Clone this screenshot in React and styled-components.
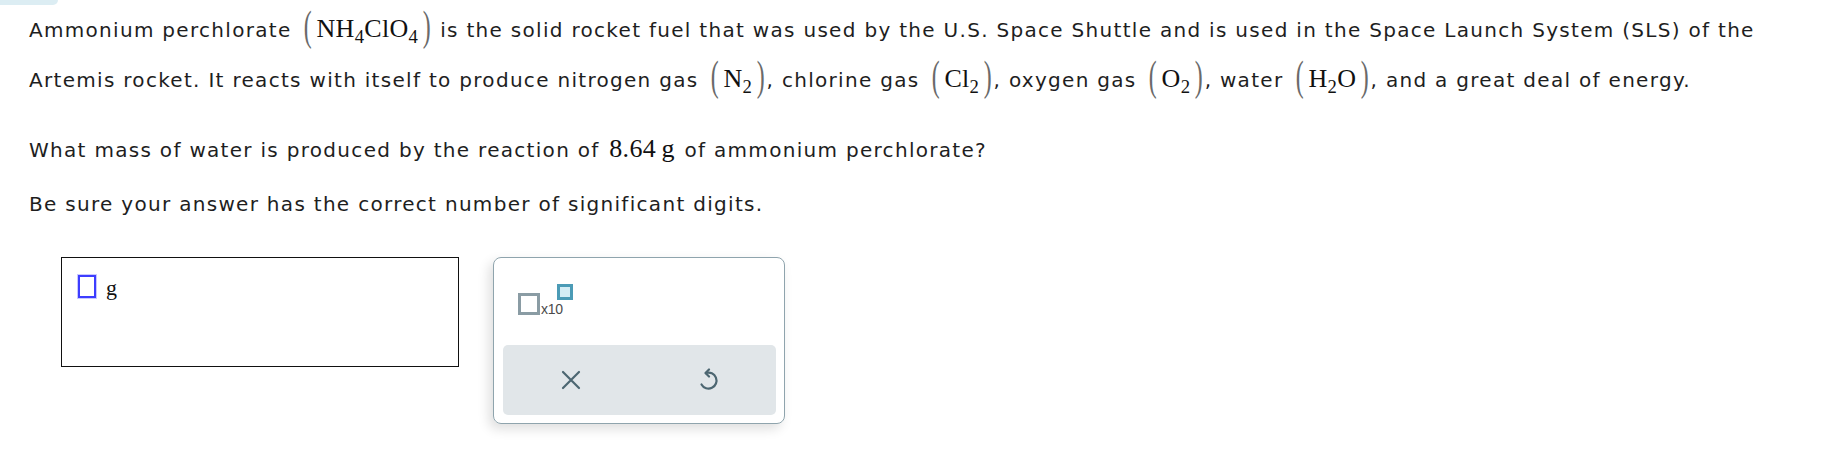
import React from 'react'
import styled, { createGlobalStyle } from 'styled-components'

const GlobalStyle = createGlobalStyle`
  body {
    margin: 0;
    background: #fff;
  }
`

const Page = styled.div`
  width: 1842px;
  height: 460px;
  overflow: hidden;
  font-family: "DejaVu Sans", Verdana, sans-serif;
  color: #1e1e1e;
`

const Tab = styled.div`
  width: 58px;
  height: 5px;
  background: #dcedf3;
  border-bottom-right-radius: 10px;
`

const Question = styled.div`
  padding: 0 40px 0 29px;
`

const Para = styled.p`
  margin: ${p => p.$top || 0}px 0 0;
  font-size: 20px;
  letter-spacing: 1.3px;
  line-height: ${p => p.$lh || 30}px;
`

const Math = styled.span`
  font-family: "Liberation Serif", "Times New Roman", serif;
  font-size: 26px;
  line-height: 1;
  letter-spacing: 0.3px;
  color: #111;
  margin: 0 ${p => p.$pad || 0}px;
`

const Sub = styled.span`
  font-size: 72%;
  line-height: 0;
  vertical-align: -0.3em;
`

const Paren = styled.span`
  display: inline-block;
  font-family: "Liberation Serif", "Times New Roman", serif;
  font-size: 28px;
  line-height: 1;
  letter-spacing: 0;
  color: #6a6a6a;
  transform: scale(0.85, 1.5);
  transform-origin: 50% 60%;
  margin: ${p => (p.$right ? '0 1px 0 4px' : '0 4px 0 4px')};
`

const Chem = ({ children }) => (
  <>
    <Paren>(</Paren>
    <Math>{children}</Math>
    <Paren $right>)</Paren>
  </>
)

const AnswerRow = styled.div`
  display: flex;
  align-items: flex-start;
  gap: 34px;
  margin-top: 38px;
  padding-left: 61px;
`

const AnswerBox = styled.div`
  box-sizing: border-box;
  width: 398px;
  height: 110px;
  border: 1px solid #111;
  padding: 17px 16px;
  display: flex;
  align-items: flex-start;
  gap: 10px;
`

const Slot = styled.div`
  box-sizing: border-box;
  width: 18px;
  height: 23px;
  border: 2px solid #3d3dff;
  box-shadow: 0 0 0 1px #c8c8ff;
`

const Unit = styled.span`
  font-family: "Liberation Serif", "Times New Roman", serif;
  font-size: 22px;
  line-height: 22px;
  margin-top: 2px;
  color: #111;
`

const Panel = styled.div`
  box-sizing: border-box;
  width: 292px;
  height: 167px;
  border: 1px solid #8fa4ad;
  border-radius: 8px;
  box-shadow: -4px 5px 12px rgba(0, 0, 0, 0.13);
  padding: 26px 8px 8px 9px;
  display: flex;
  flex-direction: column;
  justify-content: space-between;
`

const Sci = styled.div`
  display: flex;
  align-items: flex-start;
  padding-left: 15px;
  height: 32px;
`

const BigBox = styled.div`
  box-sizing: border-box;
  width: 22px;
  height: 22px;
  margin-top: 9px;
  border: 3px solid #8a9ca4;
`

const Ten = styled.span`
  font-family: "Liberation Sans", Arial, sans-serif;
  font-size: 14px;
  color: #4a4a4a;
  margin-top: 17px;
  margin-left: 1px;
  letter-spacing: -0.3px;
`

const SmallBox = styled.div`
  box-sizing: border-box;
  width: 16px;
  height: 16px;
  margin-left: -6px;
  border: 3px solid #4b9bb6;
  background: #d4edf5;
`

const Tools = styled.div`
  display: flex;
  height: 70px;
  background: #e1e6e9;
  border-radius: 5px;
`

const ToolButton = styled.div`
  flex: 1;
  display: flex;
  align-items: center;
  justify-content: center;
  color: #4c6671;
`

const CloseIcon = () => (
  <svg width="22" height="22" viewBox="0 0 22 22" fill="none" stroke="currentColor" strokeWidth="2.2" strokeLinecap="round">
    <path d="M3 3 L19 19 M19 3 L3 19" />
  </svg>
)

const UndoIcon = () => (
  <svg width="22" height="24" viewBox="0 0 22 24" fill="none" stroke="currentColor" strokeWidth="2.2" strokeLinecap="round" strokeLinejoin="round">
    <path d="M9 5 A8 8 0 1 1 4.5 16.5" />
    <path d="M12 1.5 L8.5 5 L12 8.5" />
  </svg>
)

export default function App() {
  return (
    <Page>
      <GlobalStyle />
      <Tab />
      <Question>
        <Para $lh={50}>
          Ammonium perchlorate <Chem>NH<Sub>4</Sub>ClO<Sub>4</Sub></Chem> is the solid rocket fuel that was used by the U.S. Space Shuttle and is used in the Space Launch System (SLS) of the Artemis rocket. It reacts with itself to produce nitrogen gas <Chem>N<Sub>2</Sub></Chem>, chlorine gas <Chem>Cl<Sub>2</Sub></Chem>, oxygen gas <Chem>O<Sub>2</Sub></Chem>, water <Chem>H<Sub>2</Sub>O</Chem>, and a great deal of energy.
        </Para>
        <Para $top={30}>
          What mass of water is produced by the reaction of <Math $pad={2}>8.64&thinsp;g</Math> of ammonium perchlorate?
        </Para>
        <Para $top={24}>
          Be sure your answer has the correct number of significant digits.
        </Para>
      </Question>
      <AnswerRow>
        <AnswerBox>
          <Slot />
          <Unit>g</Unit>
        </AnswerBox>
        <Panel>
          <Sci>
            <BigBox />
            <Ten>x10</Ten>
            <SmallBox />
          </Sci>
          <Tools>
            <ToolButton><CloseIcon /></ToolButton>
            <ToolButton><UndoIcon /></ToolButton>
          </Tools>
        </Panel>
      </AnswerRow>
    </Page>
  )
}
